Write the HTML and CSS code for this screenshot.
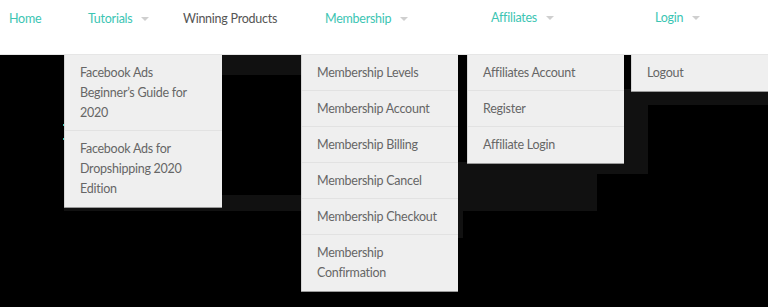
FILE: index.html
```html
<!DOCTYPE html>
<html lang="en">
  <head>
    <meta charset="UTF-8" />
    <meta name="viewport" content="width=device-width, initial-scale=1.0" />
    <title>Menu</title>
    <link rel="stylesheet" href="styles.css">
  </head>

  <body>
    <header class="site-header">
      <ul class="main-nav">
        <li class="nav-item item-home"><a class="nav-link teal" href="#">Home</a></li>
        <li class="nav-item item-tutorials">
          <a class="nav-link teal" href="#">Tutorials<span class="caret"></span></a>
          <ul class="sub-menu">
            <li><a href="#">Facebook Ads Beginner’s Guide for 2020</a></li>
            <li><a href="#">Facebook Ads for Dropshipping 2020 Edition</a></li>
          </ul>
        </li>
        <li class="nav-item item-winning"><a class="nav-link" href="#">Winning Products</a></li>
        <li class="nav-item item-membership">
          <a class="nav-link teal" href="#">Membership<span class="caret"></span></a>
          <ul class="sub-menu">
            <li><a href="#">Membership Levels</a></li>
            <li><a href="#">Membership Account</a></li>
            <li><a href="#">Membership Billing</a></li>
            <li><a href="#">Membership Cancel</a></li>
            <li><a href="#">Membership Checkout</a></li>
            <li><a href="#">Membership Confirmation</a></li>
          </ul>
        </li>
        <li class="nav-item item-affiliates raised">
          <a class="nav-link teal" href="#">Affiliates<span class="caret"></span></a>
          <ul class="sub-menu">
            <li><a href="#">Affiliates Account</a></li>
            <li><a href="#">Register</a></li>
            <li><a href="#">Affiliate Login</a></li>
          </ul>
        </li>
        <li class="nav-item item-login raised">
          <a class="nav-link teal" href="#">Login<span class="caret"></span></a>
          <ul class="sub-menu">
            <li><a href="#">Logout</a></li>
          </ul>
        </li>
      </ul>
    </header>

    <!-- page behind the open menus -->
    <main class="stage">
      <div class="ghost g1"></div>
      <div class="ghost g2"></div>
      <div class="ghost g3"></div>
      <div class="ghost g4"></div>
      <div class="ghost g5"></div>
      <div class="ghost g6"></div>
      <div class="ghost g7"></div>
      <div class="ghost g8"></div>
    </main>
  </body>
</html>
```

FILE: styles.css
```css
* {
  padding: 0;
  margin: 0;
  box-sizing: border-box;
}

html,
body {
  width: 100%;
  height: 100%;
  overflow: hidden;
}

body {
  background-color: #000;
  font-family: Lato, "Open Sans", sans-serif;
  font-size: 12.5px;
  letter-spacing: -0.25px;
  position: relative;
}

a {
  text-decoration: none;
  color: inherit;
}

ul {
  list-style: none;
}

.site-header {
  height: 55px;
  background-color: #fff;
  border-bottom: 1px solid #e6e6e6;
  position: relative;
  z-index: 10;
}

.main-nav {
  display: flex;
  height: 54px;
}

.nav-item {
  position: relative;
  padding-left: 24px;
  padding-top: 9px;
}

.item-home {
  width: 64px;
  padding-left: 9px;
}

.item-tutorials {
  width: 95px;
}

.item-winning {
  width: 142px;
}

.item-membership {
  width: 166px;
}

.item-affiliates {
  width: 164px;
}

.item-login {
  flex: 1;
}

.nav-item.raised {
  padding-top: 8px;
}

.nav-link {
  display: inline-flex;
  align-items: center;
  line-height: 20px;
  color: #555;
  white-space: nowrap;
}

.nav-link.teal {
  color: #3cc5b3;
}

.caret {
  width: 0;
  height: 0;
  margin-left: 9px;
  border-left: 4px solid transparent;
  border-right: 4px solid transparent;
  border-top: 4px solid #cfcfcf;
}

/* dropdowns */
.sub-menu {
  position: absolute;
  top: 55px;
  left: 0;
  width: 158px;
  background-color: #efefef;
  border-left: 1px solid #d6d6d6;
  box-shadow: 0 1px 0 #9a9a9a;
}

.item-affiliates .sub-menu,
.item-membership .sub-menu {
  width: 157px;
}

.sub-menu li {
  border-bottom: 1px solid #e2e2e2;
}

.sub-menu li:last-child {
  border-bottom: none;
}

.sub-menu a {
  display: block;
  padding: 8px 16px 7px 15px;
  line-height: 20px;
  color: #666;
}

.sub-menu li:last-child a {
  padding-bottom: 8px;
}

/* background page */
.stage {
  height: 252px;
}

.ghost {
  position: absolute;
  background-color: #111;
}

.g1 { left: 222px; top: 55px; width: 79px; height: 20px; }
.g2 { left: 64px; top: 195px; width: 237px; height: 16px; }
.g3 { left: 624px; top: 89px; width: 144px; height: 16px; }
.g4 { left: 624px; top: 105px; width: 24px; height: 69px; }
.g5 { left: 458px; top: 162px; width: 190px; height: 12px; }
.g6 { left: 458px; top: 174px; width: 139px; height: 37px; }
.g7 { left: 458px; top: 211px; width: 5px; height: 27px; }
.g8 { left: 63px; top: 124px; width: 2px; height: 16px; background: linear-gradient(#3cc5b3 0 2px, transparent 2px 14px, #3cc5b3 14px); }
```
